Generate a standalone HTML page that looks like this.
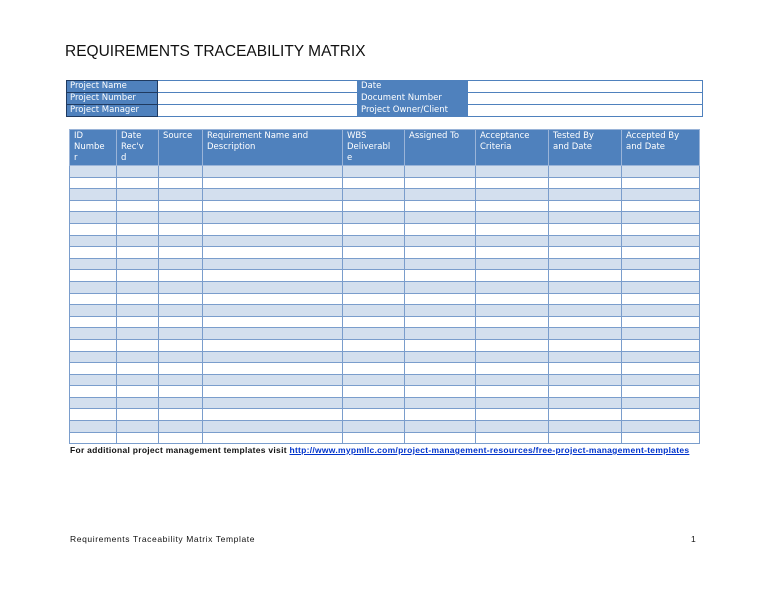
<!DOCTYPE html><html><head><style>
body{margin:0;width:768px;height:594px;background:#fff;font-family:"Liberation Sans",sans-serif;position:relative;overflow:hidden}
.a{position:absolute}
table{border-collapse:collapse;position:absolute;table-layout:fixed}
.t1 td{height:11px;padding:0 0 0 3px;font-size:8.5px;line-height:11px;border:1px solid #4f81bd;color:#fff;font-family:"DejaVu Sans",sans-serif;white-space:nowrap;overflow:hidden}
.t1 .l{background:#4f81bd}
.t1 .ld{background:#4f81bd;border-color:#1f3a60}
.t2 td{border:1px solid #7a9dcc;padding:0;height:10.6px}
.t2 th{background:#4f81bd;color:#fff;font-weight:normal;font-size:8.5px;line-height:11px;text-align:left;vertical-align:top;padding:1px 4px;height:32px;border:1px solid #9ab4d8;font-family:"DejaVu Sans",sans-serif;white-space:nowrap;overflow:hidden}
.t2 tr.s td{background:#d3dfee}
</style></head><body>
<div class="a" style="left:65px;top:43px;font-size:15.5px;color:#111">REQUIREMENTS TRACEABILITY MATRIX</div>
<table class="t1" style="left:66px;top:80px;width:637px">
<col style="width:91px"><col style="width:200px"><col style="width:110px"><col>
<tr><td class="ld">Project Name</td><td></td><td class="l">Date</td><td></td></tr>
<tr><td class="ld">Project Number</td><td></td><td class="l">Document Number</td><td></td></tr>
<tr><td class="ld">Project Manager</td><td></td><td class="l">Project Owner/Client</td><td></td></tr>
</table>
<table class="t2" style="left:69px;top:129px;width:631px">
<col style="width:47px"><col style="width:42px"><col style="width:44px"><col style="width:140px"><col style="width:62px"><col style="width:71px"><col style="width:73px"><col style="width:73px"><col>
<tr><th>ID<br>Numbe<br>r</th><th>Date<br>Rec'v<br>d</th><th>Source</th><th>Requirement Name and<br>Description</th><th>WBS<br>Deliverabl<br>e</th><th>Assigned To</th><th>Acceptance<br>Criteria</th><th>Tested By<br>and Date</th><th>Accepted By<br>and Date</th></tr>
<tr class="s"><td></td><td></td><td></td><td></td><td></td><td></td><td></td><td></td><td></td></tr>
<tr><td></td><td></td><td></td><td></td><td></td><td></td><td></td><td></td><td></td></tr>
<tr class="s"><td></td><td></td><td></td><td></td><td></td><td></td><td></td><td></td><td></td></tr>
<tr><td></td><td></td><td></td><td></td><td></td><td></td><td></td><td></td><td></td></tr>
<tr class="s"><td></td><td></td><td></td><td></td><td></td><td></td><td></td><td></td><td></td></tr>
<tr><td></td><td></td><td></td><td></td><td></td><td></td><td></td><td></td><td></td></tr>
<tr class="s"><td></td><td></td><td></td><td></td><td></td><td></td><td></td><td></td><td></td></tr>
<tr><td></td><td></td><td></td><td></td><td></td><td></td><td></td><td></td><td></td></tr>
<tr class="s"><td></td><td></td><td></td><td></td><td></td><td></td><td></td><td></td><td></td></tr>
<tr><td></td><td></td><td></td><td></td><td></td><td></td><td></td><td></td><td></td></tr>
<tr class="s"><td></td><td></td><td></td><td></td><td></td><td></td><td></td><td></td><td></td></tr>
<tr><td></td><td></td><td></td><td></td><td></td><td></td><td></td><td></td><td></td></tr>
<tr class="s"><td></td><td></td><td></td><td></td><td></td><td></td><td></td><td></td><td></td></tr>
<tr><td></td><td></td><td></td><td></td><td></td><td></td><td></td><td></td><td></td></tr>
<tr class="s"><td></td><td></td><td></td><td></td><td></td><td></td><td></td><td></td><td></td></tr>
<tr><td></td><td></td><td></td><td></td><td></td><td></td><td></td><td></td><td></td></tr>
<tr class="s"><td></td><td></td><td></td><td></td><td></td><td></td><td></td><td></td><td></td></tr>
<tr><td></td><td></td><td></td><td></td><td></td><td></td><td></td><td></td><td></td></tr>
<tr class="s"><td></td><td></td><td></td><td></td><td></td><td></td><td></td><td></td><td></td></tr>
<tr><td></td><td></td><td></td><td></td><td></td><td></td><td></td><td></td><td></td></tr>
<tr class="s"><td></td><td></td><td></td><td></td><td></td><td></td><td></td><td></td><td></td></tr>
<tr><td></td><td></td><td></td><td></td><td></td><td></td><td></td><td></td><td></td></tr>
<tr class="s"><td></td><td></td><td></td><td></td><td></td><td></td><td></td><td></td><td></td></tr>
<tr><td></td><td></td><td></td><td></td><td></td><td></td><td></td><td></td><td></td></tr>
</table>
<div class="a" style="left:70px;top:445px;font-size:8.5px;color:#111;font-weight:bold;letter-spacing:0.28px;white-space:nowrap">For additional project management templates visit <span style="color:#0033cc;text-decoration:underline">http://www.mypmllc.com/project-management-resources/free-project-management-templates</span></div>
<div class="a" style="left:70px;top:534px;font-size:8.5px;color:#111;letter-spacing:0.6px">Requirements Traceability Matrix Template</div>
<div class="a" style="left:691px;top:534px;font-size:8.5px;color:#111">1</div>
</body></html>
